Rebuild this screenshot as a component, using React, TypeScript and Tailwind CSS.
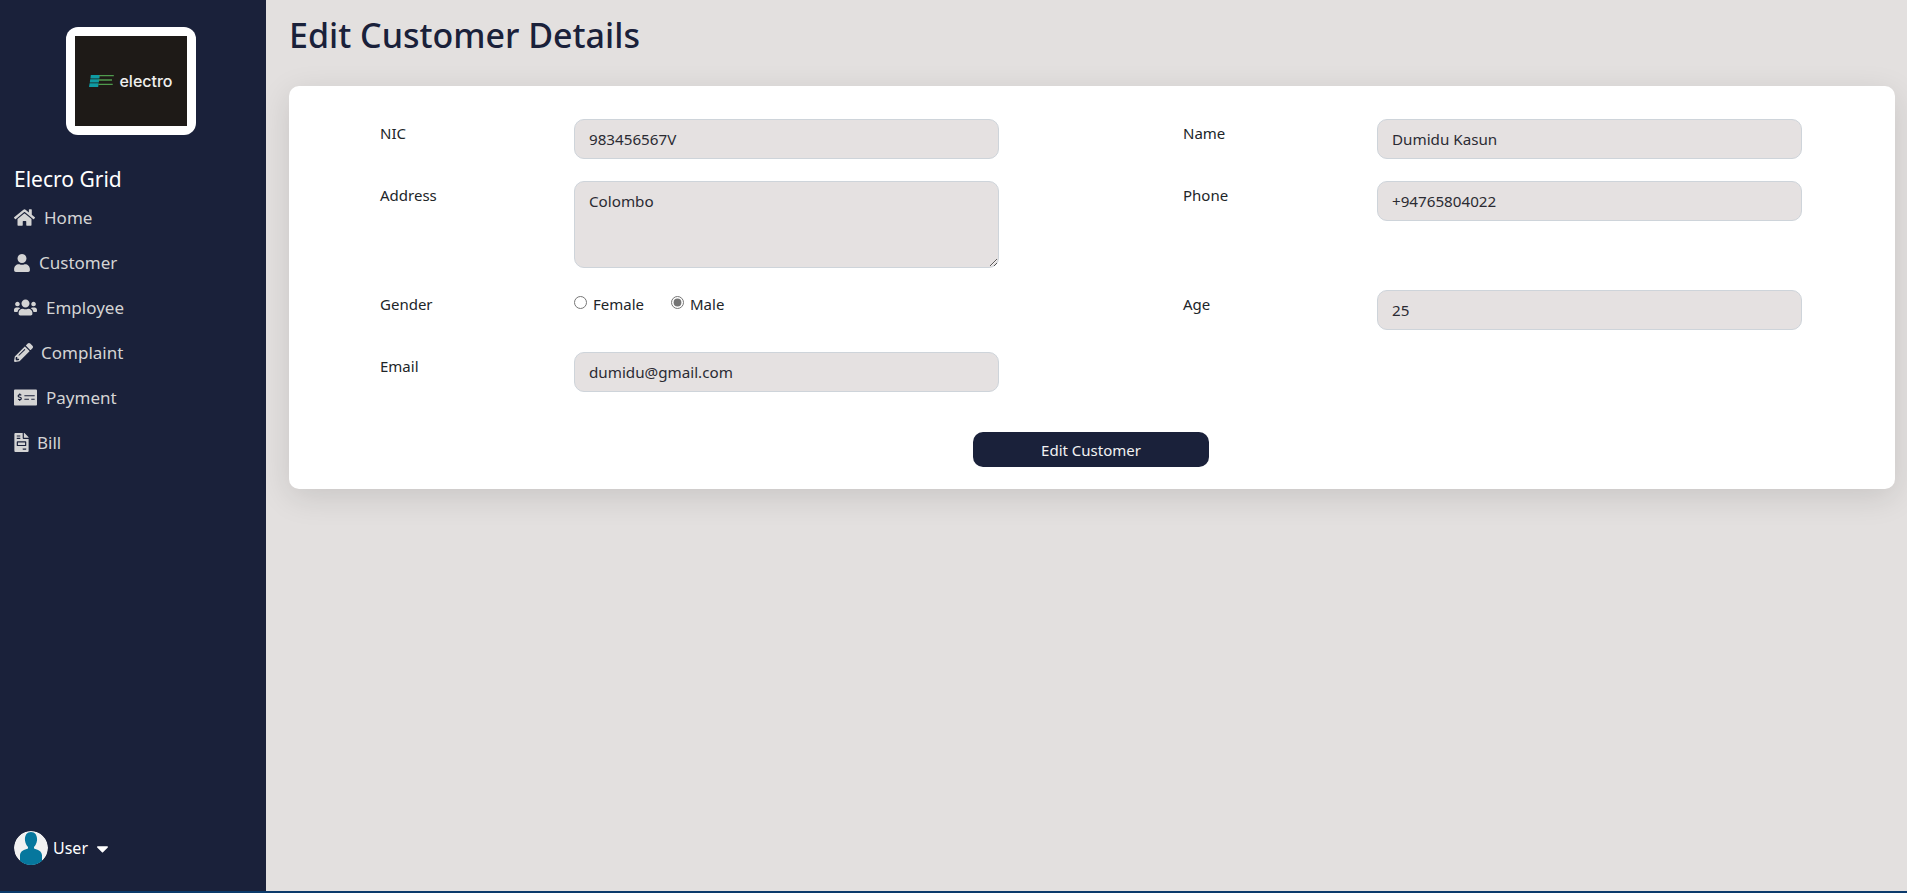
import { FaCaretDown, FaFileInvoice, FaHome, FaMoneyCheckAlt, FaPencilAlt, FaUser, FaUsers } from "react-icons/fa";

const NAV = [
  { label: "Home", icon: FaHome, size: 21, cls: "gap-[9px]" },
  { label: "Customer", icon: FaUser, size: 18, cls: "gap-[8px] [&>svg]:-ml-[1px]" },
  { label: "Employee", icon: FaUsers, size: 23, cls: "gap-[9px]" },
  { label: "Complaint", icon: FaPencilAlt, size: 19, cls: "gap-[8px]" },
  { label: "Payment", icon: FaMoneyCheckAlt, size: 23, cls: "gap-[9px]" },
  { label: "Bill", icon: FaFileInvoice, size: 19, cls: "gap-[6px] [&>svg]:-ml-[2px]" },
];

const inputCls =
  "w-full h-10 rounded-[10px] border border-[#ced4da] bg-[#e5e1e1] px-[14px] text-[15.2px] text-[#2b2b33] outline-none";

function Field({ label, children }: { label: string; children: React.ReactNode }) {
  return (
    <div className="flex">
      <label className="w-[194px] shrink-0 pt-[2px] text-[15px] leading-6 text-[#212529]">{label}</label>
      <div className="flex-1">{children}</div>
    </div>
  );
}

function Radio({ label, checked }: { label: string; checked?: boolean }) {
  return (
    <label className="flex items-center gap-[6px] text-[15px] leading-6 text-[#212529]">
      <input type="radio" name="gender" defaultChecked={checked} className="m-0 mb-[4px] h-[13px] w-[13px] accent-[#757575]" />
      {label}
    </label>
  );
}

function Logo() {
  return (
    <div className="ml-[66px] flex h-[108px] w-[130px] rounded-[12px] bg-white p-[9px]">
      <div className="flex flex-1 items-center justify-center gap-[5px] bg-[#1e1a17] pb-[1px]">
        <svg width="25" height="12" viewBox="0 0 25 12">
          <path d="M1.800 0h9l-.4 3.500h-9zM1.200 4.300h9l-.4 3.300h-9zM.6 8.300h9L9.200 12H0z" fill="#0f9ba3" />
          <path d="M10 .7h14.800M9.600 5h13.400M9.400 9.300h14.300" stroke="#4f9a4d" strokeWidth="1.300" fill="none" />
        </svg>
        <span className="font-['Inter'] text-[16px] leading-none font-medium text-[#f0f0ee]">electro</span>
      </div>
    </div>
  );
}

function Sidebar() {
  return (
    <aside className="flex w-[266px] shrink-0 flex-col justify-between bg-[#1a213a] pt-[27px] pb-[26px]">
      <div>
        <Logo />
        <div className="mt-[29px] pb-[1px] pl-[14px] text-[21px] leading-[30px] text-white">Elecro Grid</div>
        <nav className="flex flex-col">
          {NAV.map(({ label, icon: Icon, size, cls }) => (
            <a key={label} className={`flex h-[45px] items-center pl-[14px] text-[17px] text-[#d4d4d4] ${cls}`}>
              <Icon size={size} />
              {label}
            </a>
          ))}
        </nav>
      </div>
      <div className="flex items-center pl-[14px] text-[16px] text-white">
        <svg width="34" height="34" viewBox="0 0 34 34" className="rounded-full">
          <circle cx="17" cy="17" r="17" fill="#f2f2f2" />
          <path d="M17 1c4.500 0 6.500 4 6 8.500-.4 3-1.500 5-3 6.500v1.500c3.500 1 8 2.500 8 7v7.500a17 17 0 0 1-22 0V24.500c0-4.500 4.500-6 8-7V16c-1.500-1.500-2.600-3.500-3-6.500C10.500 5 12.500 1 17 1z" fill="#06779d" />
        </svg>
        <span className="ml-[5px]">User</span>
        <FaCaretDown size={19} className="ml-[5px]" />
      </div>
    </aside>
  );
}

export default function App() {
  return (
    <div className="flex h-[893px] flex-col overflow-hidden font-['Noto_Sans',sans-serif]">
      <div className="flex min-h-0 flex-1">
        <Sidebar />
        <main className="flex-1 bg-[#e3e0df] pr-3 pl-[23px]">
          <h1 className="pt-[11px] text-[34px] leading-[48px] font-medium text-[#1a213a]">Edit Customer Details</h1>
          <form className="mt-[27px] rounded-[10px] bg-white pt-[33px] pr-[93px] pb-[22px] pl-[91px] shadow-[0_8px_32px_rgba(0,0,0,0.12)]">
            <div className="grid grid-cols-[619px_619px] gap-x-[184px] gap-y-[22px]">
              <Field label="NIC">
                <input className={inputCls} defaultValue="983456567V" />
              </Field>
              <Field label="Name">
                <input className={inputCls} defaultValue="Dumidu Kasun" />
              </Field>
              <Field label="Address">
                <textarea className={`${inputCls} block h-[87px] pt-[8px]`} defaultValue="Colombo" />
              </Field>
              <Field label="Phone">
                <input className={inputCls} defaultValue="+94765804022" />
              </Field>
              <Field label="Gender">
                <div className="flex h-[28px] items-center gap-[27px]">
                  <Radio label="Female" />
                  <Radio label="Male" checked />
                </div>
              </Field>
              <Field label="Age">
                <input className={inputCls} defaultValue="25" />
              </Field>
              <Field label="Email">
                <input className={inputCls} defaultValue="dumidu@gmail.com" />
              </Field>
            </div>
            <div className="mt-10 flex justify-center">
              <button type="button" className="h-[35px] w-[236px] rounded-[10px] bg-[#1a213a] pt-[1px] text-[15px] text-[#f2f2f2]">
                Edit Customer
              </button>
            </div>
          </form>
        </main>
      </div>
      <div className="h-[2px] shrink-0 bg-[#0b3a6b]" />
    </div>
  );
}
